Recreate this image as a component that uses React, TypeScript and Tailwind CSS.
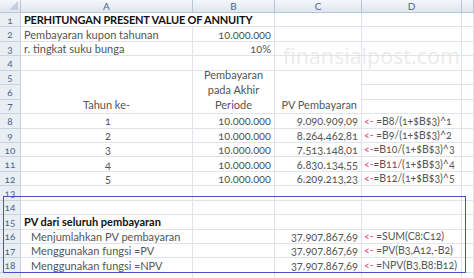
import React from "react";

const cols = ["A", "B", "C", "D", ""];

type Row = {
  a?: React.ReactNode;
  b?: React.ReactNode;
  c?: React.ReactNode;
  d?: React.ReactNode;
};

const Arrow = ({ f, tight }: { f: string; tight?: boolean }) => (
  <span>
    <span className="text-[#e8467c]">{tight ? "<-" : "<- "}</span>
    {f}
  </span>
);

const rows: Row[] = [
  { a: <span className="font-bold text-[#111] tracking-[-0.2px]">PERHITUNGAN PRESENT VALUE OF ANNUITY</span> },
  { a: "Pembayaran kupon tahunan", b: "10.000.000" },
  { a: "r. tingkat suku bunga", b: "10%" },
  {},
  {},
  {},
  {},
  { a: "1", b: "10.000.000", c: "9.090.909,09", d: <Arrow f="=B8/(1+$B$3)^1" /> },
  { a: "2", b: "10.000.000", c: "8.264.462,81", d: <Arrow f="=B9/(1+$B$3)^2" /> },
  { a: "3", b: "10.000.000", c: "7.513.148,01", d: <Arrow f="=B10/(1+$B$3)^3" tight /> },
  { a: "4", b: "10.000.000", c: "6.830.134,55", d: <Arrow f="=B11/(1+$B$3)^4" tight /> },
  { a: "5", b: "10.000.000", c: "6.209.213,23", d: <Arrow f="=B12/(1+$B$3)^5" tight /> },
  {},
  {},
  { a: <span className="font-bold text-[#111]">PV dari seluruh pembayaran</span> },
  { a: <span className="pl-[7px]">Menjumlahkan PV pembayaran</span>, c: "37.907.867,69", d: <Arrow f="=SUM(C8:C12)" /> },
  { a: <span className="pl-[7px]">Menggunakan fungsi =PV</span>, c: "37.907.867,69", d: <Arrow f="=PV(B3,A12,-B2)" /> },
  { a: <span className="pl-[7px]">Menggunakan fungsi =NPV</span>, c: "37.907.867,69", d: <Arrow f="=NPV(B3,B8:B12)" /> },
  {},
];

const line = "border-r border-b border-[#dfe4ea]";
const rowHead =
  "flex items-center justify-center border-r border-b border-[#c9d3e0] bg-[#e9eef5] text-[#4d6584] text-[10px]";

export default function App() {
  return (
    <div className="relative w-[474px] h-[278px] overflow-hidden bg-white text-[#555] text-[11px] oldstyle-nums font-['Lato','Open_Sans',sans-serif]">
      {/* watermark */}
      <div className="absolute left-[283px] top-[45px] text-[21.5px] leading-none text-[#ebebeb] font-['Open_Sans',sans-serif] lining-nums pointer-events-none">
        finansialpost.com
      </div>

      <div className="relative grid grid-cols-[21px_172px_82px_87px_100px_1fr] grid-rows-[13px_repeat(19,14.45px)] leading-none">
        {/* header row */}
        <div className="relative border-r border-b border-[#b9c5d5] bg-gradient-to-b from-[#f4f7fb] to-[#dfe6ef]">
          <div className="absolute right-[2px] bottom-[2px] w-0 h-0 border-l-[9px] border-l-transparent border-b-[9px] border-b-[#c5cfdc]" />
        </div>
        {cols.map((c, i) => (
          <div
            key={i}
            className="flex items-center justify-center border-r border-b border-[#b9c5d5] bg-gradient-to-b from-[#f4f7fb] to-[#dfe6ef] text-[#4d6584] text-[10px]"
          >
            {c}
          </div>
        ))}

        {rows.map((r, i) => {
          const n = i + 1;
          const centerA = n >= 8 && n <= 12;
          return (
            <React.Fragment key={n}>
              <div className={rowHead}>{n}</div>
              {n === 5 ? (
                <>
                  <div className={`${line} row-span-3 flex items-end justify-center pb-[3px]`}>Tahun ke-</div>
                  <div className={`${line} row-span-3 flex flex-col items-center justify-end pb-[3px] gap-[4px] text-center`}>
                    <span>Pembayaran</span>
                    <span>pada Akhir</span>
                    <span>Periode</span>
                  </div>
                  <div className={`${line} row-span-3 flex items-end justify-end pr-[4px] pb-[3px]`}>PV Pembayaran</div>
                  <div className={line} />
                  <div className={line} />
                </>
              ) : n === 6 || n === 7 ? (
                <>
                  <div className={line} />
                  <div className={line} />
                </>
              ) : (
                <>
                  <div
                    className={`${line} flex items-center whitespace-nowrap pl-[3px] ${
                      centerA ? "justify-center" : ""
                    } ${n === 1 ? "overflow-visible z-10 border-r-0" : ""}`}
                  >
                    {r.a}
                  </div>
                  <div className={`${line} flex items-center justify-end pr-[3px]`}>{r.b}</div>
                  <div className={`${line} flex items-center justify-end pr-[3px] whitespace-nowrap`}>{r.c}</div>
                  <div className={`${line} flex items-center pl-[2px] whitespace-nowrap text-[10.5px] text-[#555]`}>{r.d}</div>
                  <div className={line} />
                </>
              )}
            </React.Fragment>
          );
        })}
      </div>

      {/* selection box */}
      <div className="absolute left-[3px] top-[196px] w-[463px] h-[77px] border-[1.5px] border-[#4b4fc4] pointer-events-none" />
    </div>
  );
}
